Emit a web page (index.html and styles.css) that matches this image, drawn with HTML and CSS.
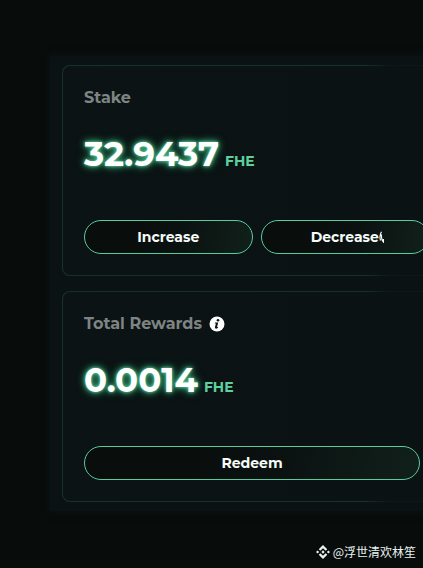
FILE: index.html
```html
<!DOCTYPE html>
<html lang="en">
<head>
  <meta charset="UTF-8" />
  <title>Stake</title>
  <meta name="viewport" content="width=device-width, initial-scale=1.0" />
  <link rel="stylesheet" href="styles.css">
</head>
<body>
  <main class="panel">
    <!-- Stake -->
    <section class="card">
      <h2 class="label">Stake</h2>
      <p class="value"><span class="amount">32.9437</span><span class="unit">FHE</span></p>
      <div class="actions">
        <button type="button" class="btn">Increase</button>
        <button type="button" class="btn">Decrease<svg class="caret" viewBox="0 0 5 12" aria-hidden="true"><path d="M2.500 .8C.8 3.500 .5 6 1.500 9.500M2.500 3.500C2.200 7 2.800 9.500 4.400 11V8" fill="none" stroke="#f4fbf8" stroke-width="1.200"/></svg></button>
      </div>
    </section>

    <!-- Total Rewards -->
    <section class="card">
      <h2 class="label">Total Rewards
        <svg class="info" viewBox="0 0 16 16" aria-hidden="true">
          <circle cx="8" cy="8" r="7.500" fill="#fff"/>
          <circle cx="9" cy="4.200" r="1.300" fill="#0b1314"/>
          <path d="M6 6.500h3.200L8 11.200l1.200-.4-.2.900C8.200 12.500 7.300 12.800 6.600 12.600 5.900 12.400 5.800 11.800 6 11.100L6.900 7.600H5.800z" fill="#0b1314"/>
        </svg>
      </h2>
      <p class="value"><span class="amount">0.0014</span><span class="unit">FHE</span></p>
      <div class="actions actions-single">
        <button type="button" class="btn">Redeem</button>
      </div>
    </section>
  </main>

  <footer class="credit">
    <svg class="logo" viewBox="0 0 24 24" aria-hidden="true">
      <path d="M12 0l7.300 7.300-2.700 2.700L12 5.400 7.400 10 4.700 7.300zM12 24l-7.300-7.300L7.400 14l4.600 4.600 4.600-4.600 2.700 2.700zM2.700 9.300L5.400 12l-2.700 2.700L0 12zM21.300 9.300L24 12l-2.700 2.700-2.700-2.700zM12 9.200l2.800 2.800-2.800 2.800L9.200 12z" fill="#e8f3ef"/>
    </svg>
    <span>@浮世清欢林笙</span>
  </footer>
</body>
</html>
```

FILE: styles.css
```css
* {
  box-sizing: border-box;
}

body {
  margin: 0;
  padding-top: 56px;
  min-height: 100vh;
  overflow-x: hidden;
  background-color: #080c0b;
  color: #f4fbf8;
  font-family: Montserrat, "DejaVu Sans", sans-serif;
}

/* runs past the right edge of the window */
.panel {
  display: flex;
  flex-direction: column;
  gap: 15px;
  margin-left: 50px;
  margin-right: -28px;
  padding: 9px 0 9px 12px;
  background-color: #0a1213;
  box-shadow: 0 0 6px 2px #0a1213;
}

.card {
  padding: 21px;
  border: 1px solid transparent;
  border-radius: 8px;
  background:
    linear-gradient(90deg, #0b1314, #0a1213) padding-box,
    linear-gradient(90deg, #18302a 78%, #0d1919 84%) border-box;
}

.label {
  display: flex;
  align-items: center;
  gap: 7px;
  margin: 0;
  font-size: 16px;
  line-height: 22px;
  font-weight: 700;
  color: #7e8483;
}

.info {
  width: 16px;
  height: 16px;
}

.value {
  display: flex;
  align-items: baseline;
  gap: 6px;
  height: 40px;
  margin: 25px 0 46px;
  line-height: 40px;
}

.amount {
  font-size: 34px;
  font-weight: 700;
  color: #fff;
  text-shadow: 0 0 3px #5fd6a0, 0 0 6px #3fae7d, 0 0 10px #27835c;
}

.unit {
  font-size: 14px;
  font-weight: 700;
  color: #5fcf9f;
}

.actions {
  display: flex;
  gap: 8px;
}

.actions-single {
  padding-right: 9px;
}

.btn {
  display: flex;
  flex: 1;
  align-items: center;
  justify-content: center;
  height: 34px;
  padding: 0;
  border: 1px solid #5bcb9b;
  border-radius: 17px;
  background: linear-gradient(100deg, #090d0c 20%, #0a1110 55%, #11201b);
  color: #f4fbf8;
  font-family: inherit;
  font-size: 14px;
  font-weight: 700;
  cursor: pointer;
}

.btn:hover {
  background: #11201b;
}

.caret {
  width: 5px;
  height: 12px;
  margin-right: -5px;
}

.credit {
  display: flex;
  align-items: center;
  justify-content: flex-end;
  gap: 3px;
  margin-top: 31px;
  padding-right: 7px;
  font-family: "Noto Sans CJK SC", sans-serif;
  font-size: 12px;
  line-height: 20px;
  color: #e8f3ef;
}

.logo {
  width: 14px;
  height: 14px;
}
```
